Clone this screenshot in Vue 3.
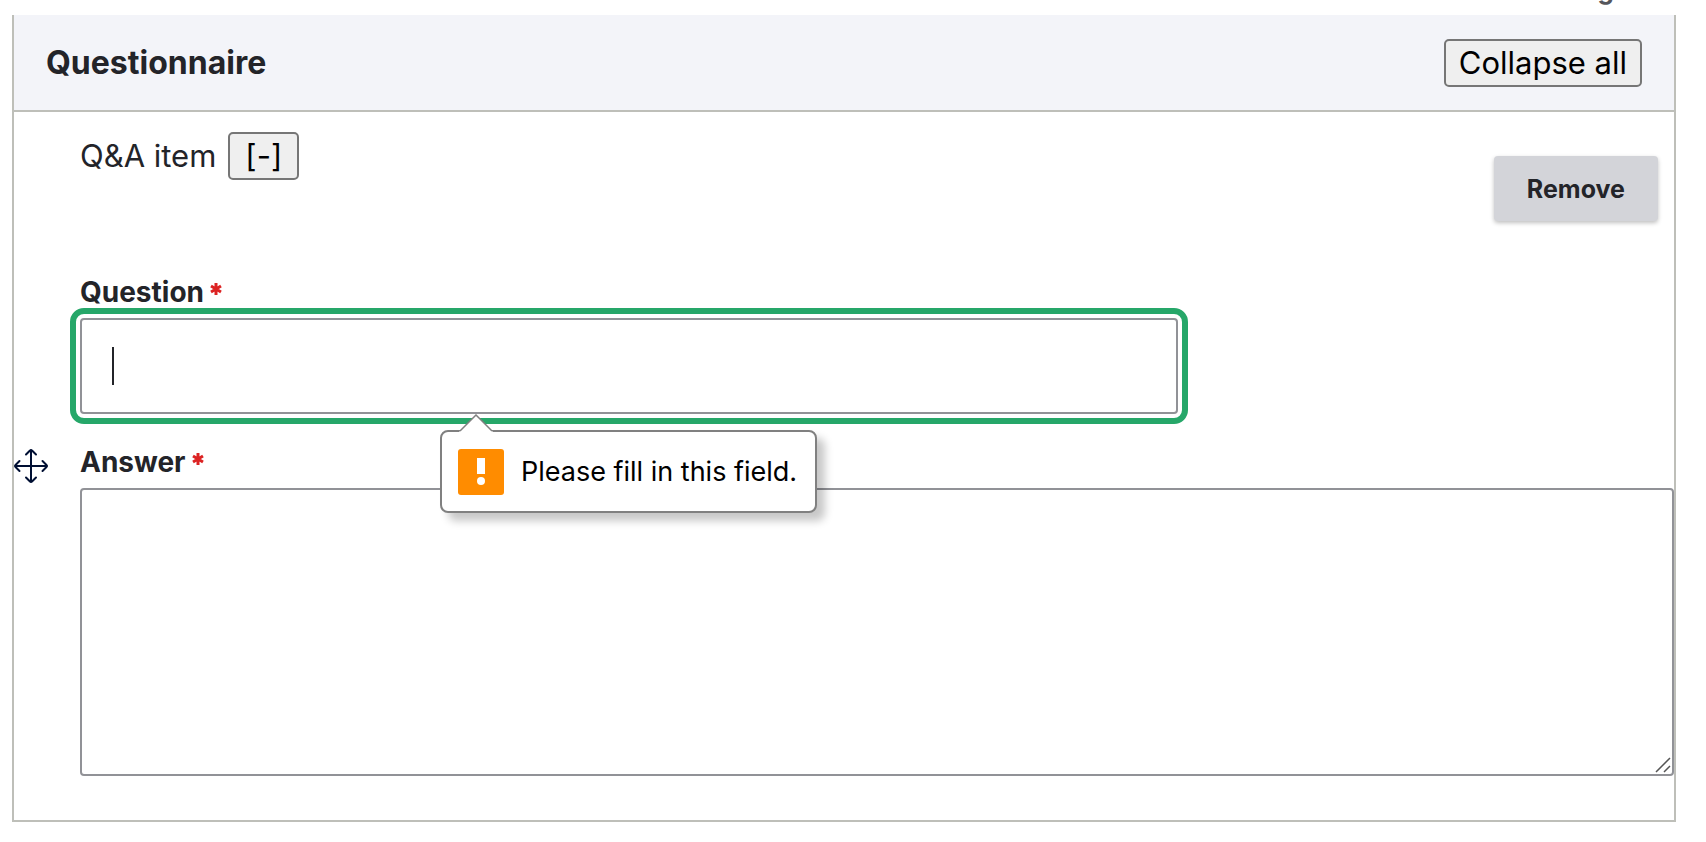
<template>
  <div class="page">
    <!-- row weights toggle -->
    <div class="weights-bar">
      <button type="button" class="weights-link">Show row weights</button>
    </div>

    <section class="paragraphs">
      <header class="paragraphs-header">
        <h4 class="title">Questionnaire</h4>
        <button type="button" class="plain-btn" @click="toggle">Collapse all</button>
      </header>

      <div class="row">
        <!-- drag handle -->
        <a href="#" class="drag-handle" aria-label="Drag to re-order" @click.prevent>
          <svg width="34" height="34" viewBox="0 0 34 34" fill="none" stroke="#000f33" stroke-width="2" stroke-linecap="round" stroke-linejoin="round">
            <path d="M17 1V33M1 17H33" />
            <path d="M12 5.5L16 1.5H18L22 5.5M12 28.5L16 32.5H18L22 28.5M5.5 12L1.5 16V18L5.5 22M28.5 12L32.5 16V18L28.5 22" />
          </svg>
        </a>

        <div class="content">
          <div class="item-top">
            <div class="item-title">
              <span>Q&amp;A item</span>
              <button type="button" class="plain-btn toggle-btn" @click="toggle">[-]</button>
            </div>
            <button type="button" class="remove-btn">Remove</button>
          </div>

          <div v-show="open" class="fields">
            <label class="label" for="question">Question<svg class="required" viewBox="0 0 12 12"><path d="M6 0V12M1 3L11 9M11 3L1 9" /></svg></label>
            <div class="input-wrap">
              <input id="question" v-model="question" type="text" required />
              <span v-if="!question" class="caret"></span>

              <!-- validation message -->
              <div v-if="!question" class="bubble" role="alert">
                <svg class="arrow" width="34" height="18" viewBox="0 0 34 18">
                  <path d="M0 18L1 17L17 1L33 17L34 18Z" fill="#fff" />
                  <path d="M1 17L17 1L33 17" fill="none" stroke="#808080" stroke-width="1.5" />
                </svg>
                <svg width="46" height="46" viewBox="0 0 46 46">
                  <rect width="46" height="46" rx="3" fill="#ff8c00" />
                  <rect x="19" y="9" width="8" height="16" fill="#fff" />
                  <circle cx="23" cy="32" r="4" fill="#fff" />
                </svg>
                <span>Please fill in this field.</span>
              </div>
            </div>

            <label class="label answer-label" for="answer">Answer<svg class="required" viewBox="0 0 12 12"><path d="M6 0V12M1 3L11 9M11 3L1 9" /></svg></label>
            <div class="textarea-wrap">
              <textarea id="answer" v-model="answer" required></textarea>
              <svg class="grip" width="16" height="16" viewBox="0 0 16 16" stroke="#555" stroke-width="1.5">
                <path d="M1 15L15 1M9 15L15 9" />
              </svg>
            </div>
          </div>
        </div>
      </div>
    </section>
  </div>
</template>

<script setup>
import { ref } from 'vue';

const question = ref('');
const answer = ref('');
const open = ref(true);

const toggle = () => {
  open.value = !open.value;
};
</script>

<style>
body {
  background: #fff;
}
</style>

<style scoped>
.page {
  padding: 0 30px 20px 12px;
  font-family: Inter, "Liberation Sans", sans-serif;
  font-size: 32px;
  color: #232429;
}

.page * {
  box-sizing: border-box;
}

.weights-bar {
  display: flex;
  justify-content: flex-end;
  align-items: flex-end;
  height: 15px;
  padding: 0 22px 9px 0;
  overflow: hidden;
}

.weights-link {
  padding: 0;
  border: none;
  background: none;
  font: 700 26px/32px Inter, "Liberation Sans", sans-serif;
  color: #55565b;
}

.paragraphs {
  border: 2px solid #bebfb9;
  border-top: none;
}

.paragraphs-header {
  display: flex;
  justify-content: space-between;
  align-items: center;
  height: 97px;
  padding: 0 32px;
  background: #f3f4f9;
  border-bottom: 2px solid #bebfb9;
}

.title {
  margin: 0;
  font-size: 32px;
  font-weight: 700;
  line-height: 40px;
}

.plain-btn {
  height: 48px;
  padding: 0 13px;
  border: 2px solid #767676;
  border-radius: 5px;
  background: #efefef;
  font-family: inherit;
  font-size: 31px;
  line-height: 44px;
  color: #000;
}

.toggle-btn {
  padding: 0 15px;
}

.row {
  display: grid;
  grid-template-columns: 66px 1fr;
  align-items: center;
}

.drag-handle {
  display: flex;
}

.content {
  padding: 20px 0 44px;
}

.item-top {
  display: flex;
  justify-content: space-between;
  padding-right: 16px;
}

.item-title {
  display: flex;
  gap: 12px;
  height: 48px;
  font-size: 31px;
  line-height: 48px;
}

.remove-btn {
  height: 65px;
  margin-top: 24px;
  padding: 0 33px;
  border: none;
  border-radius: 4px;
  background: #d3d4d9;
  box-shadow: 0 2px 4px rgba(0, 0, 0, 0.25);
  font: 700 25px/32px Inter, "Liberation Sans", sans-serif;
  color: #232429;
}

.fields {
  padding-top: 51px;
}

.label {
  display: flex;
  align-items: flex-start;
  gap: 6px;
  height: 40px;
  font-size: 28px;
  font-weight: 700;
  line-height: 40px;
}

.required {
  width: 12px;
  height: 12px;
  margin-top: 11px;
  fill: none;
  stroke: #dc2323;
  stroke-width: 3;
}

.input-wrap {
  position: relative;
  width: 1098px;
  max-width: 100%;
  margin-top: 6px;
}

input,
textarea {
  display: block;
  width: 100%;
  border: 2px solid #919297;
  border-radius: 4px;
  background: #fff;
  font-family: inherit;
  font-size: 32px;
  color: #232429;
}

input {
  height: 96px;
  padding: 0 30px;
  outline: 6px solid #26a769;
  outline-offset: 4px;
}

.caret {
  position: absolute;
  top: 29px;
  left: 32px;
  width: 2px;
  height: 38px;
  background: #232429;
}

.bubble {
  position: absolute;
  top: 112px;
  left: 360px;
  z-index: 2;
  display: flex;
  align-items: center;
  gap: 17px;
  height: 83px;
  padding: 0 18px 0 16px;
  border: 2px solid #808080;
  border-radius: 8px;
  background: #fff;
  box-shadow: 8px 8px 8px rgba(0, 0, 0, 0.22);
  font-size: 27px;
  color: #000;
  white-space: nowrap;
}

.arrow {
  position: absolute;
  top: -18px;
  left: 17px;
}

.answer-label {
  margin-top: 28px;
}

.textarea-wrap {
  position: relative;
  margin-top: 6px;
}

textarea {
  height: 288px;
  padding: 24px 30px;
  resize: none;
}

.grip {
  position: absolute;
  right: 3px;
  bottom: 3px;
}
</style>
